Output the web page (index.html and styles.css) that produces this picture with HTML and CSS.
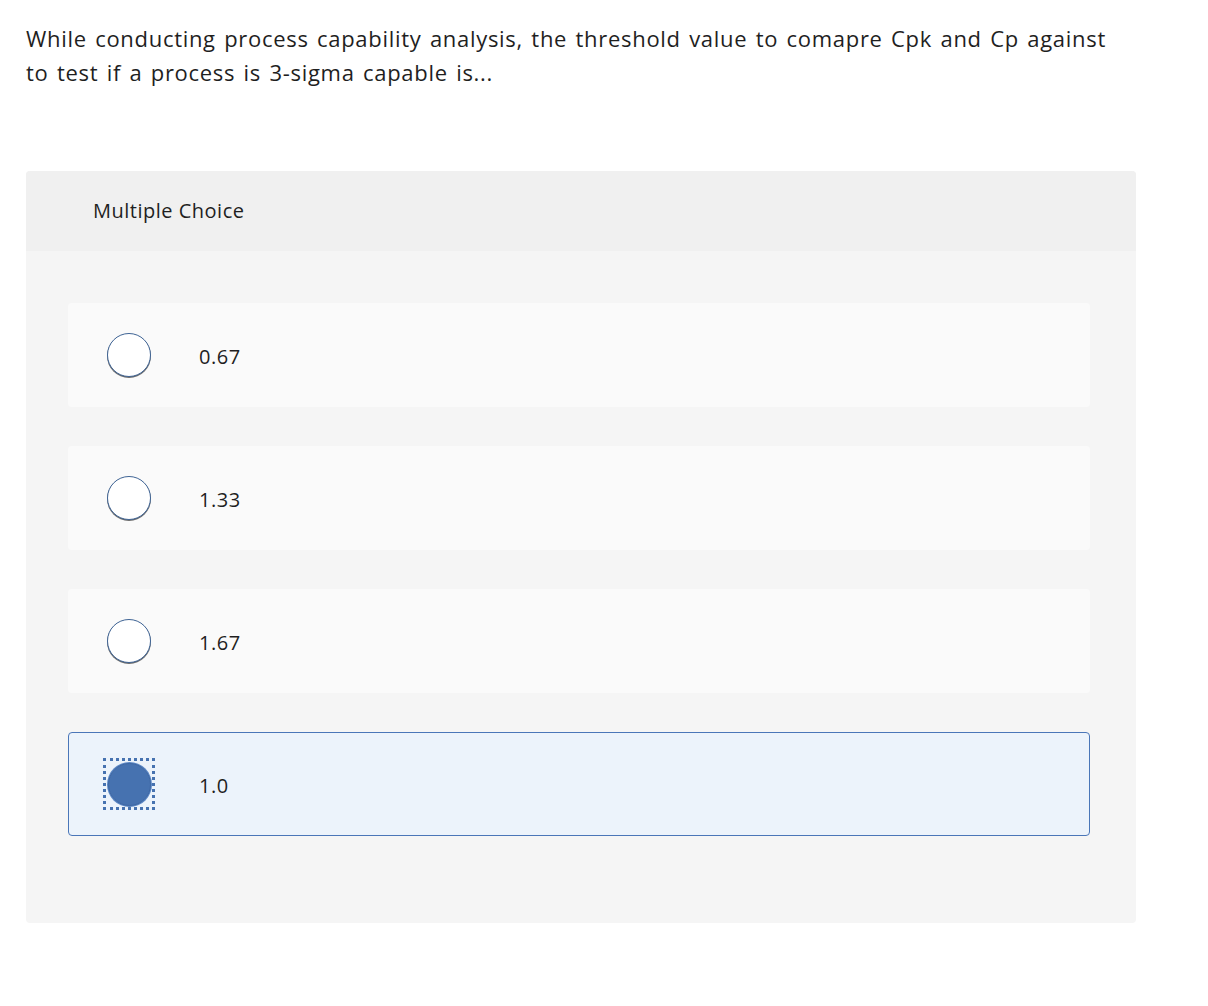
FILE: index.html
```html
<!DOCTYPE html>
<html>
<head>
<meta charset="utf-8">
<link rel="stylesheet" href="styles.css">
</head>
<body>
<div class="page">
  <p class="question">While conducting process capability analysis, the threshold value to comapre Cpk and Cp against to test if a process is 3-sigma capable is...</p>
  <div class="card">
    <div class="card-header">Multiple Choice</div>
    <div class="card-body">
      <div class="option">
        <span class="radio-wrap"><span class="radio"></span></span>
        <span class="label">0.67</span>
      </div>
      <div class="option">
        <span class="radio-wrap"><span class="radio"></span></span>
        <span class="label">1.33</span>
      </div>
      <div class="option">
        <span class="radio-wrap"><span class="radio"></span></span>
        <span class="label">1.67</span>
      </div>
      <div class="option selected">
        <span class="radio-wrap focus"><span class="radio checked"></span></span>
        <span class="label">1.0</span>
      </div>
    </div>
  </div>
</div>
</body>
</html>
```
FILE: styles.css
```css
html, body {
  margin: 0;
  padding: 0;
  background: #ffffff;
}
body {
  font-family: "Open Sans", "Lato", "Liberation Sans", sans-serif;
  color: #1f1f1f;
}
.page {
  padding: 21px 72px 0 26px;
}
.question {
  margin: 0;
  font-size: 22px;
  letter-spacing: 0.7px;
  word-spacing: 2px;
  line-height: 34px;
  width: 1100px;
}
.card {
  margin-top: 82px;
  width: 1110px;
  border-radius: 4px;
  background: #f5f5f5;
  overflow: hidden;
}
.card-header {
  height: 80px;
  background: #f0f0f0;
  display: flex;
  align-items: center;
  padding-left: 67px;
  font-size: 20px;
  letter-spacing: 0.5px;
  padding-bottom: 2px;
  box-sizing: border-box;
}
.card-body {
  padding: 52px 46px 87px 42px;
  display: flex;
  flex-direction: column;
  gap: 39px;
}
.option {
  height: 104px;
  background: #fafafa;
  border-radius: 4px;
  display: flex;
  align-items: center;
  box-sizing: border-box;
  border: 1px solid transparent;
}
.option.selected {
  background: #ecf3fb;
  border: 1px solid #4a76b8;
}
.radio-wrap {
  width: 52px;
  height: 52px;
  margin-left: 34px;
  display: flex;
  align-items: center;
  justify-content: center;
  box-sizing: border-box;
}
.radio-wrap.focus {
  outline: 3px dotted #4672b0;
  outline-offset: -3px;
}
.radio {
  width: 44px;
  height: 44px;
  border-radius: 50%;
  box-sizing: border-box;
  border: 1px solid #3f6495;
  background: #ffffff;
  box-shadow: 0 1px 0 #6b6b6b;
}
.radio.checked {
  background: #4672b0;
  border-color: #3e67a3;
  box-shadow: 0 0 0 1px #5a86c4;
  width: 43px;
  height: 43px;
}
.label {
  margin-left: 44px;
  font-size: 20px;
  letter-spacing: 0.5px;
  padding-top: 2px;
}
```
